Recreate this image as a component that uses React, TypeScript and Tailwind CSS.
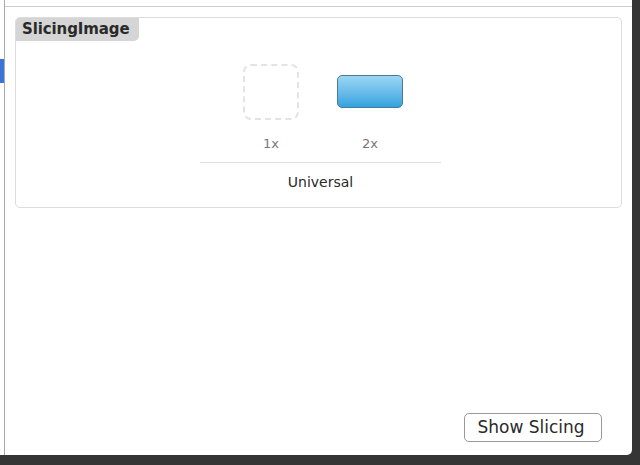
import React from "react";

export default function App() {
  return (
    <div className="w-[640px] h-[465px] bg-[#353535] overflow-hidden" style={{ fontFamily: '"DejaVu Sans", "Liberation Sans", sans-serif' }}>
      <div className="flex w-[632px] h-[455px] bg-white rounded-br-[5px]">
        <div className="w-[4px] h-full flex flex-col">
          <div className="h-[59px] bg-white" />
          <div className="h-[24px] bg-[#3b73d9]" />
        </div>
        <div className="w-[1px] h-full bg-[#a9a9a9]" />
        <div className="flex-1 flex flex-col">
          <div className="h-[6px]" />
          <div className="h-[1px] bg-[#cfcfcf]" />
          <div className="flex-1 flex flex-col pl-[10px] pr-[10px] pt-[10px] pb-[13px]">
            <div className="h-[191px] border border-[#dcdcdc] rounded-[5px] flex flex-col">
              <div className="flex">
                <div className="bg-[#d5d5d5] rounded-br-[5px] rounded-tl-[4px] h-[23px] pl-[6px] pr-[9px] flex items-center text-[15px] font-bold text-[#2a2a2a] tracking-[-0.1px]">
                  SlicingImage
                </div>
              </div>
              <div className="flex flex-col items-center mt-[23px] pl-[4px]">
                <div className="flex items-start gap-[38px] ml-[5px]">
                  <div className="flex flex-col items-center w-[56px]">
                    <div className="w-[56px] h-[56px] border-2 border-dashed border-[#e3e3e3] rounded-[8px]" />
                    <div className="mt-[16px] text-[13px] text-[#777] leading-[16px]">1x</div>
                  </div>
                  <div className="flex flex-col items-center w-[66px]">
                    <div className="mt-[11px] w-[66px] h-[33px] rounded-[5px] border border-[#4f7894] bg-gradient-to-b from-[#9bd6f3] to-[#2fa3e0]" />
                    <div className="mt-[28px] text-[13px] text-[#777] leading-[16px]">2x</div>
                  </div>
                </div>
                <div className="mt-[10px] w-[241px] h-[1px] bg-[#dedede]" />
                <div className="mt-[11px] text-[14px] text-[#2a2a2a] leading-[16px]">Universal</div>
              </div>
            </div>
            <div className="flex-1" />
            <div className="flex justify-end pr-[20px]">
              <div className="w-[138px] h-[29px] border border-[#9a9a9a] rounded-[5px] flex items-center justify-center text-[17px] text-[#2a2a2a] pr-[4px]">
                Show Slicing
              </div>
            </div>
          </div>
        </div>
      </div>
    </div>
  );
}
